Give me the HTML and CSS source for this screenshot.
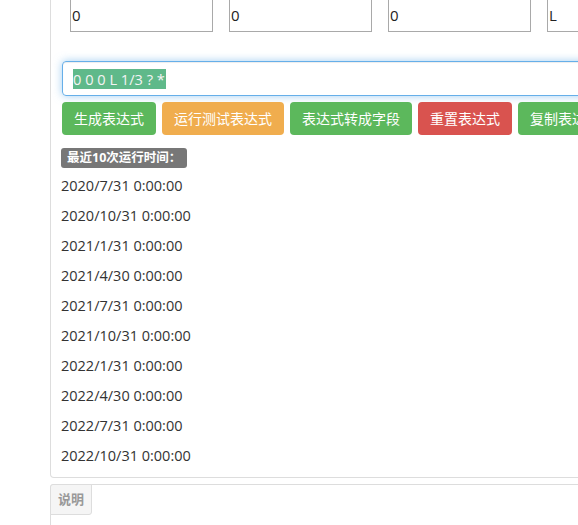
FILE: index.html
```html
<!DOCTYPE html>
<html>
<head>
<meta charset="utf-8">
<link rel="stylesheet" href="styles.css">
</head>
<body>
<div class="page">
  <div class="panel main">
    <div class="fields">
      <div class="field">0</div>
      <div class="field">0</div>
      <div class="field">0</div>
      <div class="field">L</div>
    </div>
    <div class="expr"><span class="sel">0 0 0 L 1/3 ? *</span></div>
    <div class="btns">
      <span class="btn green">生成表达式</span>
      <span class="btn orange">运行测试表达式</span>
      <span class="btn green">表达式转成字段</span>
      <span class="btn red">重置表达式</span>
      <span class="btn green">复制表达式</span>
    </div>
    <span class="label">最近10次运行时间：</span>
    <ul class="times">
      <li>2020/7/31 0:00:00</li>
      <li>2020/10/31 0:00:00</li>
      <li>2021/1/31 0:00:00</li>
      <li>2021/4/30 0:00:00</li>
      <li>2021/7/31 0:00:00</li>
      <li>2021/10/31 0:00:00</li>
      <li>2022/1/31 0:00:00</li>
      <li>2022/4/30 0:00:00</li>
      <li>2022/7/31 0:00:00</li>
      <li>2022/10/31 0:00:00</li>
    </ul>
  </div>
  <div class="panel second">
    <span class="tab">说明</span>
  </div>
</div>
</body>
</html>
```
FILE: styles.css
```css
html, body {
  margin: 0;
  padding: 0;
  background: #fff;
  overflow: hidden;
  font-family: "Open Sans", "Noto Sans CJK SC", sans-serif;
  color: #333;
}
.page {
  padding-left: 50px;
  margin-top: -12px;
  width: 760px;
}
.panel {
  border: 1px solid #ddd;
  border-radius: 4px;
  background: #fff;
}
.main {
  border-top: none;
  padding: 10px 11px 6px 11px;
}
.fields {
  display: flex;
  gap: 16px;
  padding-left: 8px;
}
.field {
  width: 140px;
  height: 32px;
  border: 1px solid #a9a9a9;
  font-size: 15px;
  line-height: 32px;
  padding-left: 1px;
  box-sizing: content-box;
  color: #222;
  flex: none;
}
.expr {
  margin-top: 29px;
  height: 33px;
  border: 1px solid #66afe9;
  border-radius: 4px;
  box-shadow: inset 0 1px 1px rgba(0,0,0,.075), 0 0 8px rgba(102,175,233,.6);
  display: flex;
  align-items: center;
  padding-left: 10px;
  font-size: 14.6px;
}
.sel {
  background: #5fb98a;
  color: #f4f4f4;
  line-height: 20px;
  padding-right: 1px;
}
.btns {
  display: flex;
  gap: 6px;
  margin-top: 6px;
}
.btn {
  flex: none;
  height: 33px;
  line-height: 33px;
  padding: 0 12px;
  font-size: 14px;
  color: #fff;
  border-radius: 4px;
  box-sizing: border-box;
}
.w5 { width: 95px; }
.green { background: #5cb85c; }
.orange { background: #f0ad4e; }
.red { background: #d9534f; }
.label {
  display: inline-block;
  margin-top: 13px;
  background: #777;
  color: #fff;
  font-size: 12.5px;
  font-weight: bold;
  border-radius: 3px;
  padding: 0 6px;
  line-height: 20px;
  height: 20px;
  margin-left: -1px;
}
.times {
  list-style: none;
  margin: 3px 0 0 -1px;
  padding: 0;
}
.times li {
  font-size: 14.5px;
  line-height: 30px;
  height: 30px;
  color: #333;
}
.second {
  margin-top: 6px;
  height: 60px;
  border-bottom: none;
  border-radius: 4px 4px 0 0;
}
.tab {
  display: inline-block;
  margin-top: -1px;
  margin-left: -1px;
  width: 40px;
  height: 29px;
  line-height: 28px;
  text-align: center;
  font-size: 13px;
  font-weight: bold;
  color: #999;
  background: #f5f5f5;
  border: 1px solid #ddd;
  border-radius: 3px 0 3px 0;
}
```
